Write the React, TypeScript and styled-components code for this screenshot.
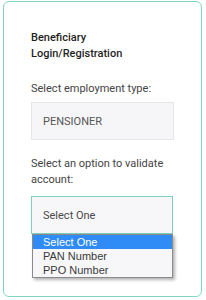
import React from "react";
import styled, { createGlobalStyle } from "styled-components";

const Global = createGlobalStyle`
  html, body { margin: 0; padding: 0; background: #ffffff; }
  body { font-family: Roboto, "Noto Sans", Arial, sans-serif; }
  * { box-sizing: border-box; }
`;

const Card = styled.div`
  margin: 1px 4px 0 3px;
  height: 296px;
  border: 1.5px solid #82d4c3;
  border-radius: 6px;
  padding: 28px 27px 0 27px;
  display: flex;
  flex-direction: column;
`;

const Title = styled.div`
  font-size: 11px;
  font-weight: 500;
  line-height: 16px;
  color: #1f1f1f;
`;

const Label = styled.div<{ $top: number }>`
  margin-top: ${(p) => p.$top}px;
  font-size: 11px;
  line-height: 16px;
  color: #444444;
`;

const ReadOnlyField = styled.div`
  margin-top: 5px;
  width: 143px;
  height: 38px;
  background: #f6f6f8;
  border: 1px solid #e6e6ea;
  display: flex;
  align-items: center;
  padding-left: 11px;
  font-size: 11px;
  color: #555555;
`;

const SelectWrap = styled.div`
  position: relative;
  margin-top: 8px;
  width: 142px;
`;

const SelectBox = styled.div`
  height: 38px;
  background: #f7f7f9;
  border: 1px solid #7fcfbf;
  display: flex;
  align-items: center;
  padding-left: 11px;
  font-size: 11px;
  color: #4a4a4a;
`;

const Popup = styled.div`
  position: absolute;
  top: 38px;
  left: 1px;
  width: 141px;
  background: #f7f7f9;
  border: 1px solid #8a8a8a;
  box-shadow: 2px 2px 3px rgba(0, 0, 0, 0.3);
  display: flex;
  flex-direction: column;
`;

const Option = styled.div<{ $active?: boolean }>`
  height: 14px;
  line-height: 14px;
  padding-left: 10px;
  font-family: "Liberation Sans", Arial, sans-serif;
  font-size: 11px;
  color: ${(p) => (p.$active ? "#ffffff" : "#3a3a3a")};
  background: ${(p) => (p.$active ? "#2f8cf6" : "transparent")};
`;

export default function App() {
  return (
    <>
      <Global />
      <Card>
        <Title>Beneficiary</Title>
        <Title>Login/Registration</Title>
        <Label $top={19}>Select employment type:</Label>
        <ReadOnlyField>PENSIONER</ReadOnlyField>
        <Label $top={16}>
          Select an option to validate
          <br />
          account:
        </Label>
        <SelectWrap>
          <SelectBox>Select One</SelectBox>
          <Popup>
            <Option $active>Select One</Option>
            <Option>PAN Number</Option>
            <Option>PPO Number</Option>
          </Popup>
        </SelectWrap>
      </Card>
    </>
  );
}
